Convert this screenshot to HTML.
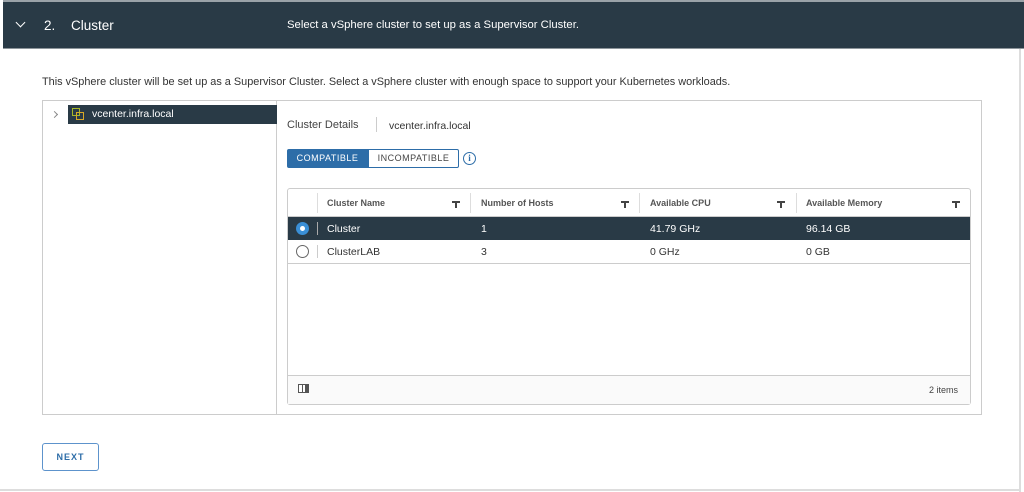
<!DOCTYPE html>
<html><head><style>
*{box-sizing:border-box;margin:0;padding:0}
body{width:1024px;height:492px;background:#fff;font-family:"Liberation Sans",sans-serif;position:relative;overflow:hidden;color:#333}
.a{position:absolute}
.hdr{left:3px;top:0;width:1021px;height:49px;background:#293a46;border-top:2px solid #9aa2a8;border-bottom:1px solid #8d959b}
.w{color:#fff;font-size:13.5px}
.t{font-size:10px;color:#333}
.th{font-size:9px;font-weight:bold;color:#555}
.filt{width:8px;height:7px}
.filt:before{content:"";position:absolute;left:0;top:0;width:8px;height:2px;background:#444}
.filt:after{content:"";position:absolute;left:3px;top:2px;width:2px;height:5px;background:#444}
</style></head><body>
<div class="a hdr"></div>
<div class="a" style="left:17px;top:19px;width:7px;height:7px;border-right:1.5px solid #fff;border-bottom:1.5px solid #fff;transform:rotate(45deg)"></div>
<div class="a w" style="left:44px;top:18px">2.</div>
<div class="a w" style="left:71px;top:18px">Cluster</div>
<div class="a w" style="left:287px;top:19px;font-size:11.3px">Select a vSphere cluster to set up as a Supervisor Cluster.</div>
<div class="a" style="left:1019px;top:49px;width:2px;height:443px;background:#ddd"></div>
<div class="a" style="left:0;top:489px;width:1021px;height:2px;background:#ddd"></div>
<div class="a t" style="left:42px;top:76px;font-size:10.9px">This vSphere cluster will be set up as a Supervisor Cluster. Select a vSphere cluster with enough space to support your Kubernetes workloads.</div>
<div class="a" style="left:42px;top:100px;width:940px;height:315px;border:1px solid #ccc"></div>
<div class="a" style="left:276px;top:101px;width:1px;height:313px;background:#ccc"></div>
<div class="a" style="left:52px;top:112px;width:5px;height:5px;border-right:1px solid #888;border-top:1px solid #888;transform:rotate(45deg)"></div>
<div class="a" style="left:68px;top:105px;width:209px;height:19px;background:#293a46"></div>
<div class="a" style="left:72px;top:108px;width:8px;height:8px;border:1.5px solid #a8b828"></div>
<div class="a" style="left:76px;top:112px;width:8px;height:8px;border:1.5px solid #d8a828"></div>
<div class="a" style="left:92px;top:108px;color:#fff;font-size:10.5px">vcenter.infra.local</div>
<div class="a" style="left:287px;top:119px;font-size:11px;color:#444">Cluster Details</div>
<div class="a" style="left:376px;top:117px;width:1px;height:15px;background:#ccc"></div>
<div class="a t" style="left:389px;top:120px;font-size:10.5px">vcenter.infra.local</div>
<div class="a" style="left:287px;top:149px;width:81px;height:19px;background:#2d6da8;border:1px solid #2d6da8;color:#fff;font-size:9px;text-align:center;line-height:17px;letter-spacing:.5px;border-radius:2px 0 0 2px">COMPATIBLE</div>
<div class="a" style="left:368px;top:149px;width:91px;height:19px;border:1px solid #2d6da8;color:#444;font-size:9px;text-align:center;line-height:17px;letter-spacing:.5px;border-radius:0 2px 2px 0">INCOMPATIBLE</div>
<div class="a" style="left:463px;top:152px;width:13px;height:13px;border:1.5px solid #2d6da8;border-radius:50%;color:#2d6da8;font-size:9px;font-weight:bold;text-align:center;line-height:10px;font-family:'Liberation Serif',serif">i</div>
<div class="a" style="left:287px;top:188px;width:684px;height:217px;border:1px solid #ccc;border-radius:3px"></div>
<div class="a" style="left:288px;top:216px;width:682px;height:1px;background:#ccc"></div>
<div class="a" style="left:317px;top:193px;width:1px;height:20px;background:#ddd"></div>
<div class="a" style="left:470px;top:193px;width:1px;height:20px;background:#ddd"></div>
<div class="a" style="left:639px;top:193px;width:1px;height:20px;background:#ddd"></div>
<div class="a" style="left:796px;top:193px;width:1px;height:20px;background:#ddd"></div>
<div class="a th" style="left:327px;top:198px">Cluster Name</div>
<div class="a th" style="left:481px;top:198px">Number of Hosts</div>
<div class="a th" style="left:650px;top:198px">Available CPU</div>
<div class="a th" style="left:806px;top:198px">Available Memory</div>
<div class="a filt" style="left:452px;top:201px"></div>
<div class="a filt" style="left:621px;top:201px"></div>
<div class="a filt" style="left:777px;top:201px"></div>
<div class="a filt" style="left:952px;top:201px"></div>
<div class="a" style="left:288px;top:217px;width:682px;height:23px;background:#293a46"></div>
<div class="a" style="left:296px;top:222px;width:13px;height:13px;border-radius:50%;background:#3a8fd6;border:4px solid #3a8fd6"><div style="width:5px;height:5px;background:#fff;border-radius:50%;margin:0"></div></div>
<div class="a" style="left:317px;top:222px;width:1px;height:13px;background:#aaa"></div>
<div class="a" style="left:327px;top:223px;color:#fff;font-size:10.5px">Cluster</div>
<div class="a" style="left:481px;top:223px;color:#fff;font-size:10.5px">1</div>
<div class="a" style="left:650px;top:223px;color:#fff;font-size:10.5px">41.79 GHz</div>
<div class="a" style="left:806px;top:223px;color:#fff;font-size:10.5px">96.14 GB</div>
<div class="a" style="left:296px;top:245px;width:13px;height:13px;border-radius:50%;border:1px solid #666"></div>
<div class="a" style="left:317px;top:245px;width:1px;height:13px;background:#ccc"></div>
<div class="a t" style="left:327px;top:246px;font-size:10.5px">ClusterLAB</div>
<div class="a t" style="left:481px;top:246px;font-size:10.5px">3</div>
<div class="a t" style="left:650px;top:246px;font-size:10.5px">0 GHz</div>
<div class="a t" style="left:806px;top:246px;font-size:10.5px">0 GB</div>
<div class="a" style="left:288px;top:263px;width:682px;height:1px;background:#ccc"></div>
<div class="a" style="left:288px;top:375px;width:682px;height:29px;background:#fafafa;border-top:1px solid #ccc"></div>
<div class="a" style="left:298px;top:384px;width:11px;height:9px;border:1px solid #555;background:linear-gradient(90deg,#fff 0 3px,#555 3px 4px,#fff 4px 6px,#555 6px)"></div>
<div class="a" style="left:929px;top:385px;font-size:9px;color:#444">2 items</div>
<div class="a" style="left:42px;top:443px;width:57px;height:28px;border:1px solid #5d93cc;border-radius:3px;color:#2d6da8;font-size:9px;font-weight:bold;letter-spacing:1px;text-align:center;line-height:26px">NEXT</div>
</body></html>
